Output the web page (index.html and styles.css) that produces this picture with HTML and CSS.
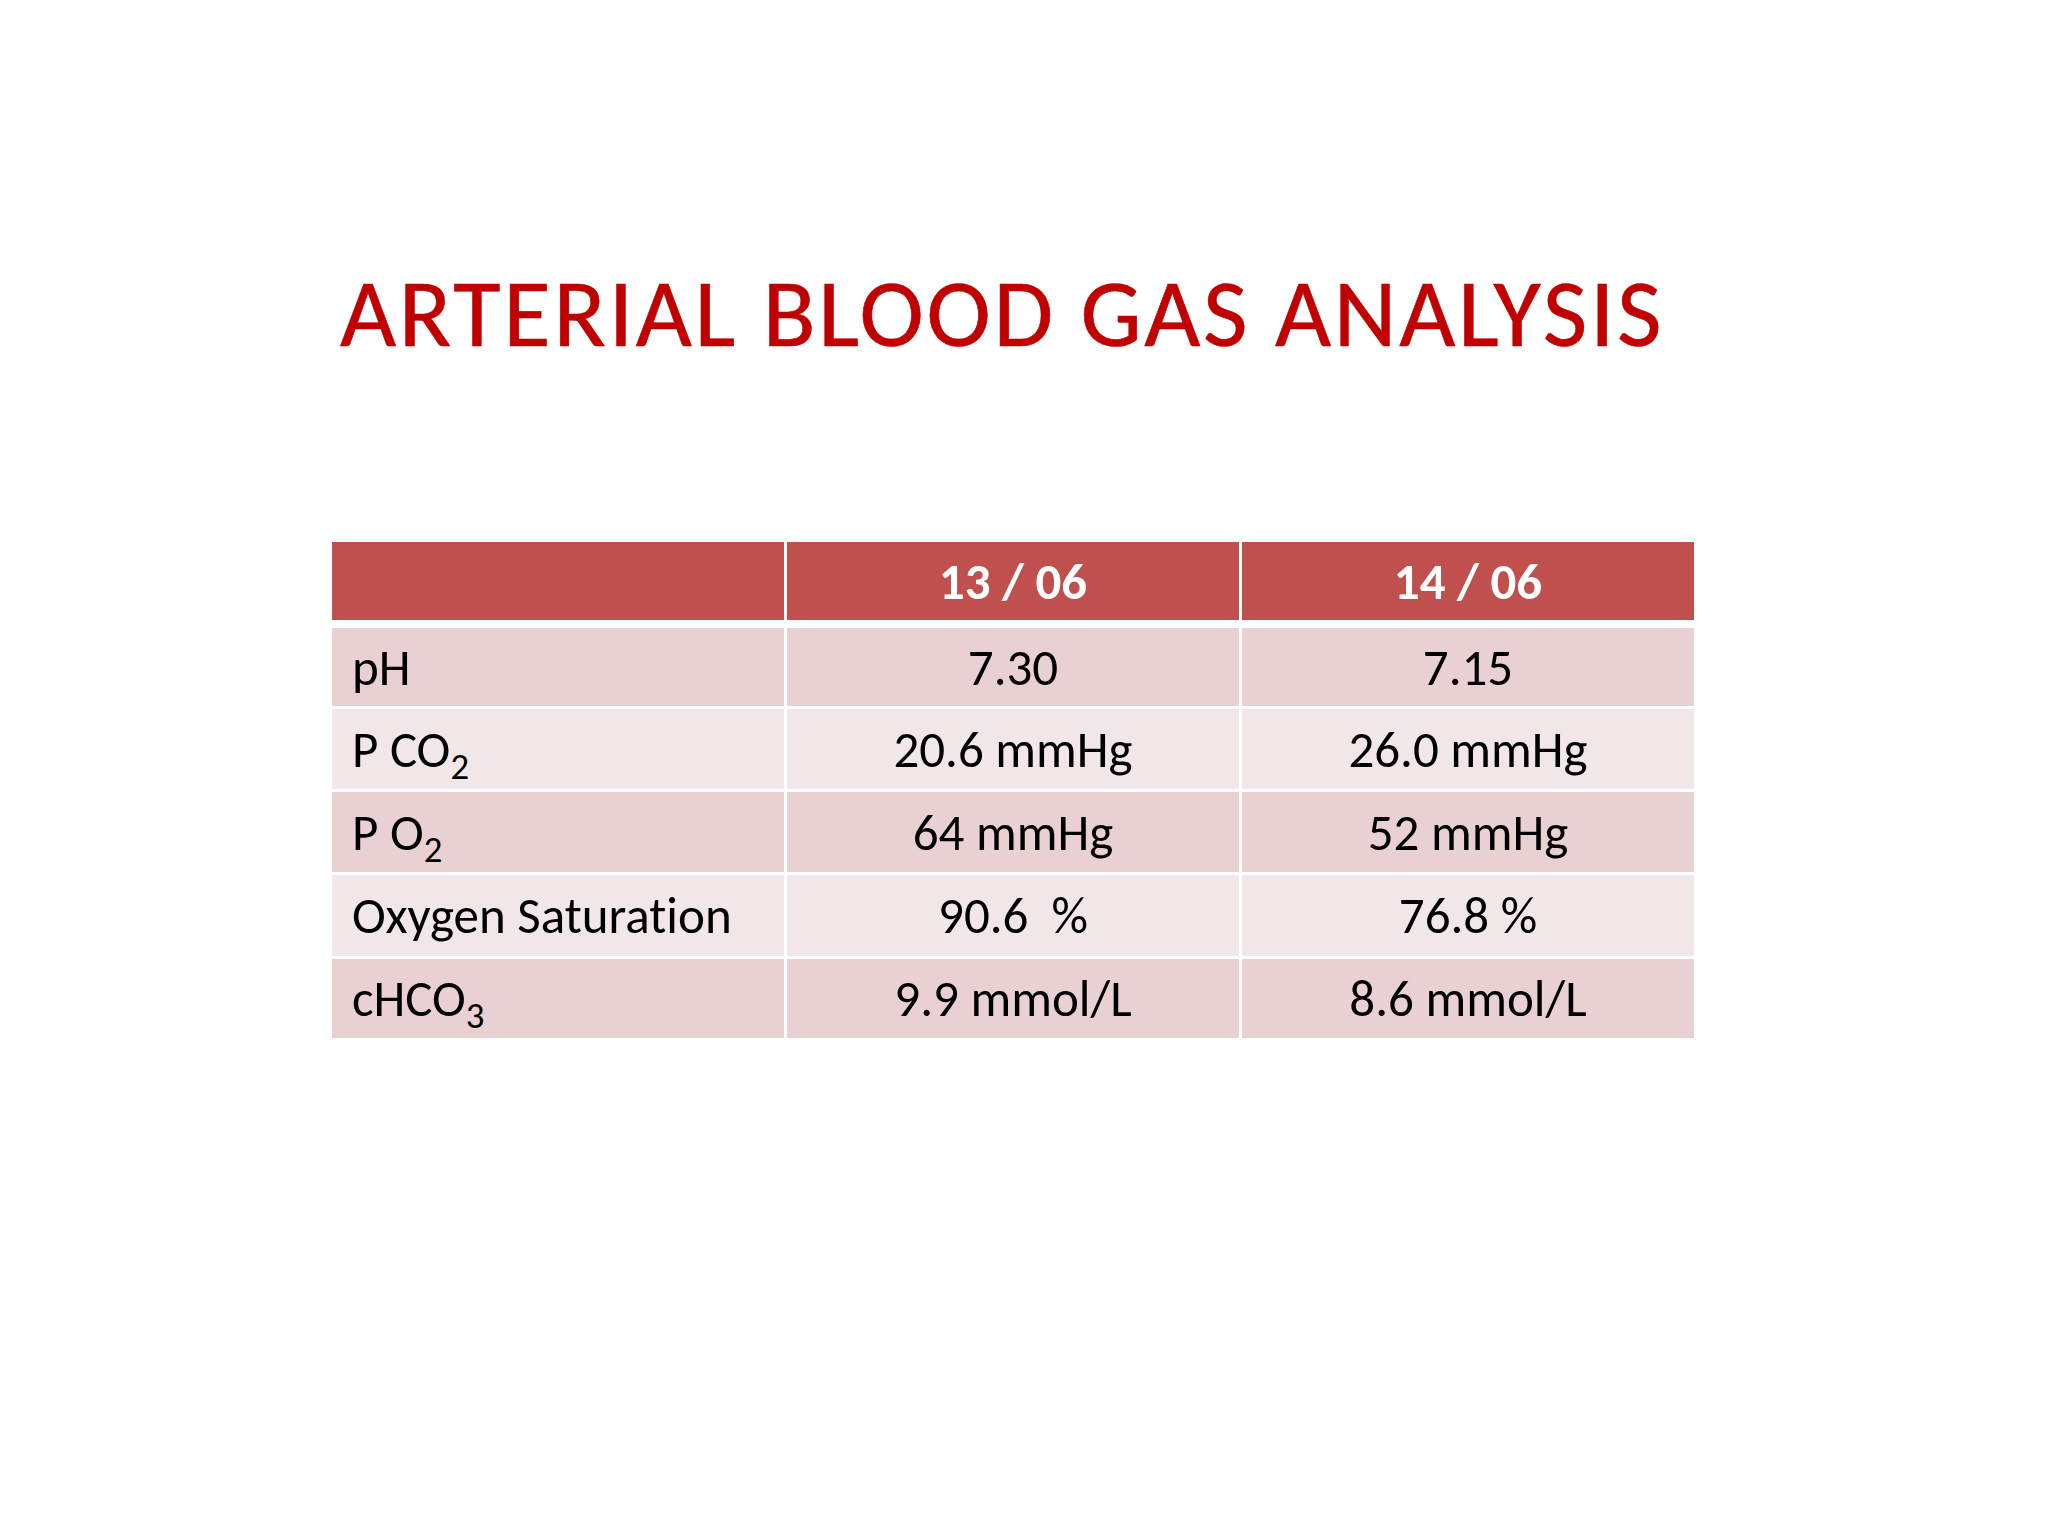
FILE: index.html
```html
<!DOCTYPE html>
<html lang="en">
<head>
<meta charset="utf-8">
<title>Arterial Blood Gas Analysis</title>
<link rel="stylesheet" href="styles.css">
</head>
<body>
<main class="slide">
  <h1 class="title">ARTERIAL BLOOD GAS ANALYSIS</h1>
  <div class="abg-table">
    <div class="cell head"></div>
    <div class="cell head center"><span>13 / 06</span></div>
    <div class="cell head center"><span>14 / 06</span></div>

    <div class="cell odd"><span>pH</span></div>
    <div class="cell odd center"><span>7.30</span></div>
    <div class="cell odd center"><span>7.15</span></div>

    <div class="cell even"><span>P CO<sub>2</sub></span></div>
    <div class="cell even center"><span>20.6 mmHg</span></div>
    <div class="cell even center"><span>26.0 mmHg</span></div>

    <div class="cell odd"><span>P O<sub>2</sub></span></div>
    <div class="cell odd center"><span>64 mmHg</span></div>
    <div class="cell odd center"><span>52 mmHg</span></div>

    <div class="cell even"><span>Oxygen Saturation</span></div>
    <div class="cell even center"><span>90.6&nbsp; %</span></div>
    <div class="cell even center"><span>76.8 %</span></div>

    <div class="cell odd"><span>cHCO<sub>3</sub></span></div>
    <div class="cell odd center"><span>9.9 mmol/L</span></div>
    <div class="cell odd center"><span>8.6 mmol/L</span></div>
  </div>
</main>
</body>
</html>
```

FILE: styles.css
```css
html, body {
  margin: 0;
  padding: 0;
  background: #ffffff;
}

.slide {
  width: 2048px;
  height: 1536px;
  background: #ffffff;
  font-family: Carlito, Lato, "Open Sans", sans-serif;
  font-variant-ligatures: none;
  display: flex;
  flex-direction: column;
  padding-top: 255px;
  box-sizing: border-box;
}

.title {
  margin: 0 0 0 340px;
  font-size: 97px;
  line-height: 1.2;
  font-weight: 400;
  letter-spacing: 2.7px;
  color: #c00000;
  white-space: nowrap;
  -webkit-text-stroke: 0.6px #c00000;
}

.abg-table {
  margin: 171px 0 0 332px;
  width: 1362px;
  display: grid;
  grid-template-columns: 452px 452px 452px;
  grid-template-rows: 83px 78px 80px 80px 81px 79px;
  column-gap: 3px;
  row-gap: 3px;
}

.cell {
  display: flex;
  align-items: center;
  padding: 0 20px;
  font-size: 51px;
  color: #000000;
  white-space: nowrap;
}

.center {
  justify-content: center;
  padding: 0;
}

.head {
  background: #c0504d;
  color: #ffffff;
  font-weight: 700;
  margin-bottom: 5px;
}

.odd {
  background: #e9d0d3;
}

.even {
  background: #f2e7e8;
}

.cell sub {
  font-size: 0.72em;
  line-height: 0;
  vertical-align: -0.32em;
}
```
